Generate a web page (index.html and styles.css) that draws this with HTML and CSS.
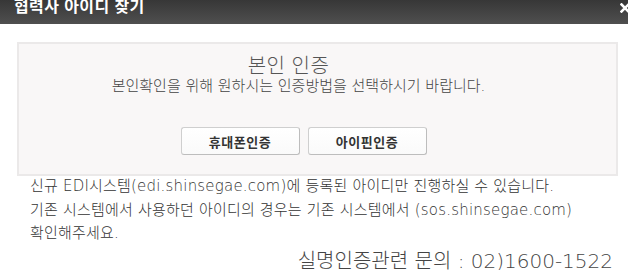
FILE: index.html
```html
<!DOCTYPE html>
<html lang="ko">
<head>
<meta charset="utf-8">
<link rel="stylesheet" href="styles.css">
</head>
<body>
<div class="popup">
  <div class="header">
    <h1 class="title">협력사 아이디 찾기</h1>
    <svg class="close" width="10" height="10" viewBox="0 0 10 10"><path d="M1.5 1.5 L8.5 8.5 M8.5 1.5 L1.5 8.5" stroke="#fff" stroke-width="2.6" stroke-linecap="square"/></svg>
  </div>
  <div class="auth-box">
    <div class="auth-title">본인 인증</div>
    <div class="auth-desc">본인확인을 위해 원하시는 인증방법을 선택하시기 바랍니다.</div>
    <div class="btns">
      <button class="btn">휴대폰인증</button>
      <button class="btn">아이핀인증</button>
    </div>
  </div>
  <div class="notes">
    <p>신규 EDI시스템(edi.shinsegae.com)에 등록된 아이디만 진행하실 수 있습니다.</p>
    <p>기존 시스템에서 사용하던 아이디의 경우는 기존 시스템에서 (sos.shinsegae.com)</p>
    <p>확인해주세요.</p>
  </div>
  <div class="contact">실명인증관련 문의 : 02)1600-1522</div>
</div>
</body>
</html>
```
FILE: styles.css
```css
html, body {
  margin: 0;
  padding: 0;
  background: #fff;
}
body {
  font-family: "DejaVu Sans", "Noto Sans CJK KR", sans-serif;
  color: #333;
  width: 628px;
  height: 270px;
  overflow: hidden;
}
.header {
  height: 24px;
  background: linear-gradient(#373737, #4f4f4f);
  display: flex;
  justify-content: space-between;
  align-items: flex-start;
  overflow: hidden;
}
.title {
  margin: -5px 0 0 14px;
  font-family: "Noto Sans CJK KR", sans-serif;
  font-size: 16px;
  line-height: 20px;
  letter-spacing: 0.4px;
  font-weight: bold;
  color: #fff;
}
.close {
  margin: 3px -2px 0 0;
}
.auth-box {
  margin: 18px 10px 0 17px;
  background: #f9f7f7;
  border: 2px solid #ebe9e9;
  box-sizing: border-box;
  height: 134px;
  display: flex;
  flex-direction: column;
  align-items: center;
}
.auth-title {
  margin-top: 9px;
  padding-right: 58px;
  font-family: "Noto Sans CJK KR", sans-serif;
  font-size: 20px;
  line-height: 24px;
  letter-spacing: 0.5px;
  font-weight: 300;
  color: #555;
}
.auth-desc {
  padding-right: 38px;
  font-size: 15px;
  line-height: 18px;
  font-weight: 300;
  color: #444;
}
.btns {
  margin-top: 32px;
  padding-right: 28px;
  display: flex;
  gap: 8px;
}
.btn {
  width: 119px;
  height: 28px;
  background: linear-gradient(#fff, #fafafa);
  border: 1px solid #cfcfcf;
  border-right-color: #bdbdbd;
  border-bottom-color: #bdbdbd;
  border-radius: 3px;
  font-family: "Noto Sans CJK KR", sans-serif;
  font-size: 13px;
  font-weight: bold;
  color: #333;
  letter-spacing: 0.5px;
  padding: 0;
}
.notes {
  margin-top: -1px;
  padding-left: 30px;
}
.notes p {
  margin: 0;
  font-size: 15px;
  line-height: 23.5px;
  letter-spacing: 0.2px;
  font-weight: 300;
  color: #333;
}
.contact {
  text-align: right;
  padding-right: 15px;
  font-size: 20px;
  line-height: 20px;
  font-weight: 300;
  color: #444;
  margin-top: 5px;
}
```
